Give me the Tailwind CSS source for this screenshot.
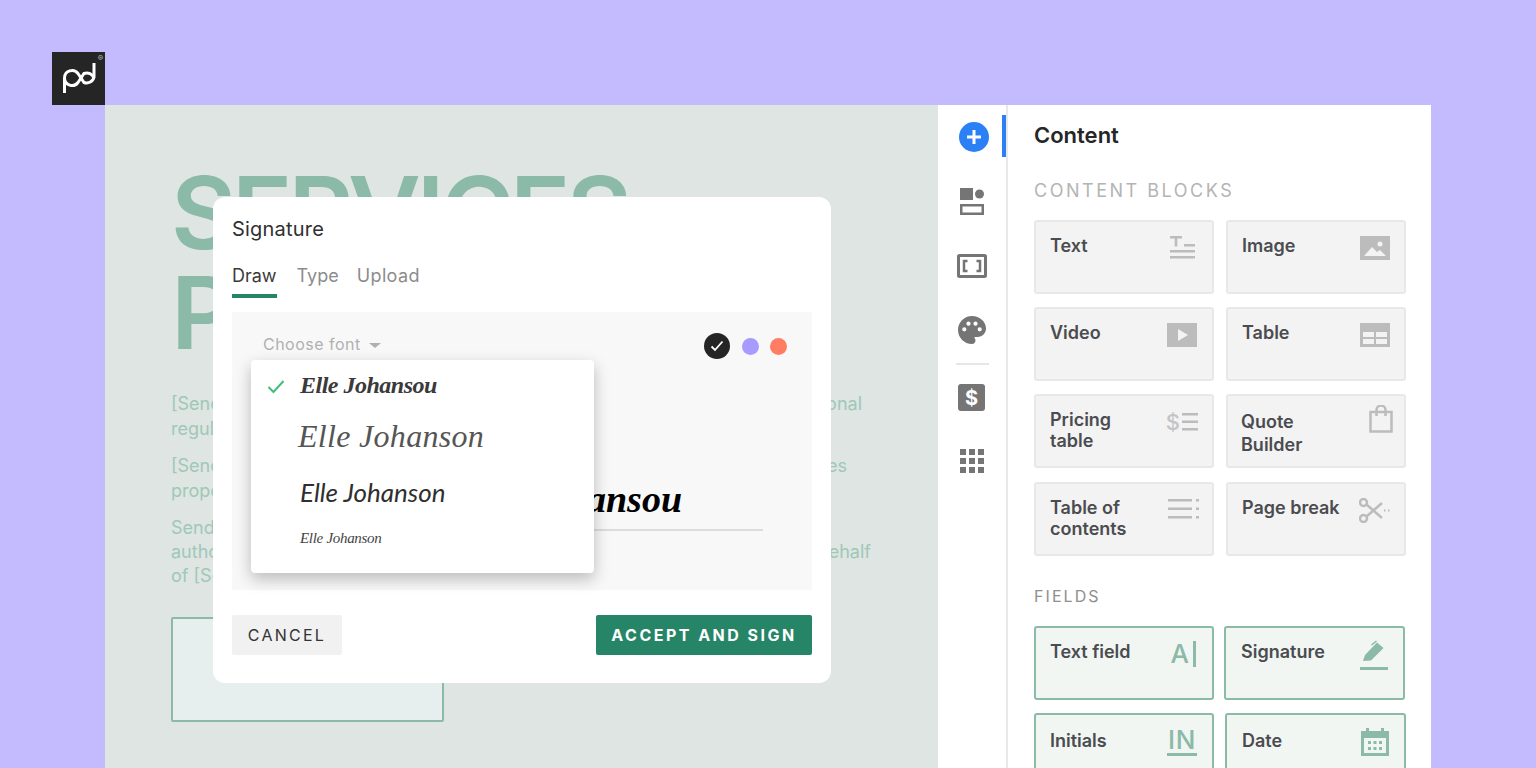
<!DOCTYPE html>
<html lang="en">
<head>
    <meta charset="UTF-8">
    <title>PandaDoc - Signature</title>
    <script src="https://cdn.jsdelivr.net/npm/@tailwindcss/browser@4"></script>
</head>
<body class="bg-[#c4bbff] font-['Inter',sans-serif] overflow-hidden">
<div class="relative w-[1536px] h-[768px] overflow-hidden pt-[105px] pl-[105px]">

    <!-- logo -->
    <div class="absolute left-[52px] top-[52px] w-[53px] h-[53px] bg-[#252525] z-10">
        <svg class="absolute inset-0" width="53" height="53" viewBox="0 0 53 53" fill="none" stroke="#fff" stroke-width="3">
            <path d="M12.500 41V26a7.500 7.500 0 0 1 13.500-4.500l6 9a7.500 7.500 0 0 0 10-5.500V11"/>
            <path d="M12.500 26a7.500 7.500 0 0 0 13.500 4.500l6-9a7.500 7.500 0 0 1 10 4.500"/>
        </svg>
        <span class="absolute right-[2px] top-[1px] text-[8px] leading-[10px] text-[#bbb]">®</span>
    </div>

    <div class="flex w-[1326px] h-[663px] overflow-hidden">

        <!-- document -->
        <div class="relative w-[833px] shrink-0 bg-[#dee5e3] pl-[66px] pt-[58px] text-[#8cbaa8]">
            <h1 class="text-[100px] leading-[100px] font-semibold tracking-[-4px]">SERVICES<br>PROPOSAL</h1>
            <div class="mt-[28px] text-[18px] leading-[25px] text-[#9fc8b7] whitespace-nowrap">
                <p>
                    <span class="block w-[691px] [text-align-last:justify]">[Sender.Company] provides a full range of certified and licensed professional</span>
                    <span class="block">regulatory services for all of its clients</span>
                </p>
                <p class="mt-[12px]">
                    <span class="block w-[676px] [text-align-last:justify]">[Sender.Company] will deliver these services as outlined in this services</span>
                    <span class="block">proposal and its terms</span>
                </p>
                <p class="mt-[12px]">
                    <span class="block">Sender is duly authorized to sign this document and to act</span>
                    <span class="block leading-[24px] w-[700px] [text-align-last:justify]">authorized parties, and has the full right to sign on behalf</span>
                    <span class="block leading-[24px]">of [Sender.Company]</span>
                </p>
            </div>
            <div class="mt-[29px] w-[273px] h-[105px] border-2 border-[#8bbaa8] rounded-[2px] bg-[#e6efed]"></div>

            <!-- signature modal -->
            <div class="absolute left-[108px] top-[92px] w-[618px] h-[486px] bg-white rounded-[12px] px-[19px] pt-[19px] text-[#333]">
                <div class="text-[20px] leading-[26px] tracking-[0.01em] text-[#303030]">Signature</div>
                <div class="flex mt-[21px] text-[18px] leading-[26px] text-[#8c8c8c]">
                    <div class="h-[35px] border-b-[4px] border-[#268567] text-[#3a3a3a] mr-[20px]">Draw</div>
                    <div class="mr-[18px]">Type</div>
                    <div class="tracking-[0.02em]">Upload</div>
                </div>
                <div class="relative mt-[14px] h-[278px] bg-[#f8f8f8]">
                    <div class="flex items-center gap-[8px] pl-[31px] pt-[20px] text-[16px] leading-[24px] tracking-[0.03em] text-[#b0b0b0]">
                        Choose font
                        <span class="mt-[3px] w-0 h-0 border-x-[6px] border-x-transparent border-t-[5px] border-t-[#b0b0b0]"></span>
                    </div>
                    <div class="absolute right-[25px] top-[21px] flex items-center">
                        <div class="w-[26px] h-[26px] mr-[12px] rounded-full bg-[#252525] flex items-center justify-center">
                            <svg width="14" height="12" viewBox="0 0 14 12" fill="none" stroke="#fff" stroke-width="1.800"><path d="M1.500 6.500l3.500 3.500 7.500-8.500"/></svg>
                        </div>
                        <div class="w-[17px] h-[17px] mr-[11px] rounded-full bg-[#a79bff]"></div>
                        <div class="w-[17px] h-[17px] rounded-full bg-[#ff7d63]"></div>
                    </div>
                    <!-- current signature -->
                    <div class="absolute left-[130px] right-[49px] top-[217px] border-t-2 border-[#dcdcdc]"></div>
                    <div class="absolute left-[223px] top-[165px] font-['Liberation_Serif',serif] italic font-bold text-[38px] leading-[44px] text-black whitespace-nowrap">Elle Johansou</div>
                    <!-- font dropdown -->
                    <div class="absolute left-[19px] top-[48px] w-[343px] h-[213px] bg-white rounded-[4px] shadow-[0_6px_16px_rgba(0,0,0,0.25)] pl-[49px] text-[#333] whitespace-nowrap">
                        <svg class="absolute left-[16px] top-[19px]" width="18" height="15" viewBox="0 0 18 15" fill="none" stroke="#3fc07a" stroke-width="2"><path d="M1.500 8l5 5 10-11"/></svg>
                        <div class="h-[50px] pt-[8px] font-['Liberation_Serif',serif] italic font-bold text-[24px] leading-[34px] text-[#3a3a3a] tracking-[-0.5px]">Elle Johansou</div>
                        <div class="h-[50px] pt-[6px] -ml-[2px] font-['Liberation_Serif',serif] italic text-[32px] leading-[40px] text-[#555] tracking-[0.3px]">Elle Johanson</div>
                        <div class="h-[60px] pt-[14px] font-['Lato',sans-serif] italic text-[26px] leading-[36px] text-[#2f2f2f]">Elle Johanson</div>
                        <div class="pt-[6px] font-['Liberation_Serif',serif] italic text-[15px] leading-[24px] text-[#444] tracking-[-0.3px]">Elle Johanson</div>
                    </div>
                </div>
                <div class="flex justify-between mt-[25px]">
                    <div class="w-[110px] h-[40px] rounded-[2px] bg-[#f1f1f1] flex items-center justify-center text-[16px] tracking-[0.14em] text-[#333]">CANCEL</div>
                    <div class="w-[216px] h-[40px] rounded-[2px] bg-[#268567] flex items-center justify-center text-[16px] font-bold tracking-[0.155em] text-white">ACCEPT AND SIGN</div>
                </div>
            </div>
        </div>

        <!-- icon rail -->
        <div class="relative w-[70px] shrink-0 bg-white border-r-2 border-[#e8e8e8] flex flex-col items-center pt-[17px] text-[#757575]">
            <div class="absolute right-0 top-[10px] w-[4px] h-[42px] bg-[#2b80f5]"></div>
            <svg class="ml-[4px]" width="30" height="30" viewBox="0 0 30 30"><circle cx="15" cy="15" r="15" fill="#2b80f5"/><path d="M15 8v14M8 15h14" stroke="#fff" stroke-width="3"/></svg>
            <svg class="mt-[36px]" width="26" height="28" viewBox="0 0 26 28" fill="currentColor"><rect x="1" y="0" width="13" height="12"/><circle cx="20.500" cy="6" r="4.500"/><path fill-rule="evenodd" d="M1 16h24v11H1zM3.500 18.500v6h19v-6z"/></svg>
            <svg class="mt-[38px]" width="30" height="24" viewBox="0 0 30 24" fill="none" stroke="currentColor"><rect x="1.500" y="1.500" width="27" height="21" rx="1" stroke-width="3"/><path d="M10.500 7H7v10h3.500M19.500 7H23v10h-3.500" stroke-width="2.500"/></svg>
            <svg class="mt-[38px]" width="28" height="28" viewBox="2 2 20 20" fill="currentColor"><path d="M12 2C6.490 2 2 6.490 2 12s4.490 10 10 10c1.380 0 2.500-1.120 2.500-2.500 0-.61-.23-1.200-.64-1.670-.08-.1-.13-.21-.13-.33 0-.28.22-.5.500-.5H16c3.310 0 6-2.690 6-6 0-4.960-4.490-9-10-9zm-5.500 11a1.500 1.500 0 1 1 0-3 1.500 1.500 0 0 1 0 3zm3-4a1.500 1.500 0 1 1 0-3 1.500 1.500 0 0 1 0 3zm5 0a1.500 1.500 0 1 1 0-3 1.500 1.500 0 0 1 0 3zm3 4a1.500 1.500 0 1 1 0-3 1.500 1.500 0 0 1 0 3z"/></svg>
            <div class="mt-[19px] w-[33px] h-[2px] bg-[#e6e6e6]"></div>
            <svg class="mt-[19px]" width="28" height="27" viewBox="0 0 28 27"><rect width="27" height="27" rx="3" fill="currentColor"/><text x="13.500" y="21" text-anchor="middle" font-size="20" font-weight="700" fill="#fff" font-family="Inter, sans-serif">$</text></svg>
            <svg class="mt-[38px]" width="24" height="24" viewBox="0 0 24 24" fill="currentColor"><path d="M0 0h6v6H0zM9 0h6v6H9zM18 0h6v6h-6zM0 9h6v6H0zM9 9h6v6H9zM18 9h6v6h-6zM0 18h6v6H0zM9 18h6v6H9zM18 18h6v6h-6z"/></svg>
        </div>

        <!-- content panel -->
        <div class="flex-1 bg-white pl-[26px] pt-[17px] text-[#4b4c50] font-semibold text-[18px] leading-[21px]">
            <div class="text-[22px] leading-[26px] text-[#262626]">Content</div>
            <div class="mt-[31px] text-[18px] leading-[24px] font-normal tracking-[0.14em] text-[#b4b4b4]">CONTENT BLOCKS</div>
            <div class="mt-[17px] grid grid-cols-[180px_180px] gap-x-[12px] gap-y-[13px] auto-rows-[74px]">
                <div class="relative border-2 border-[#e8e8e8] rounded-[3px] bg-[#f3f3f3] pl-[14px] pt-[13px]">Text
                    <svg class="absolute right-[17px] top-[14px]" width="25" height="25" viewBox="0 0 25 25" fill="#bcbcbc"><path d="M0 0h12v2.500H7.300v8H4.700v-8H0zM14 8h11v2.500H14zM0 14h25v2.500H0zM0 20h25v2.500H0z"/></svg>
                </div>
                <div class="relative border-2 border-[#e8e8e8] rounded-[3px] bg-[#f3f3f3] pl-[14px] pt-[13px]">Image
                    <svg class="absolute right-[14px] top-[14px]" width="30" height="24" viewBox="0 0 30 24"><rect width="30" height="24" fill="#bcbcbc"/><path d="M4 20l8-9 5 5 3-2 6 6z" fill="#f3f3f3"/><circle cx="20" cy="8" r="2.500" fill="#f3f3f3"/></svg>
                </div>
                <div class="relative border-2 border-[#e8e8e8] rounded-[3px] bg-[#f3f3f3] pl-[14px] pt-[13px]">Video
                    <svg class="absolute right-[15px] top-[14px]" width="30" height="24" viewBox="0 0 30 24"><rect width="30" height="24" fill="#bcbcbc"/><path d="M11 6l10 6-10 6z" fill="#f3f3f3"/></svg>
                </div>
                <div class="relative border-2 border-[#e8e8e8] rounded-[3px] bg-[#f3f3f3] pl-[14px] pt-[13px]">Table
                    <svg class="absolute right-[14px] top-[14px]" width="30" height="24" viewBox="0 0 30 24"><rect width="30" height="24" fill="#bcbcbc"/><path d="M3 9h11v5H3zM16 9h11v5H16zM3 16h11v5H3zM16 16h11v5H16z" fill="#f3f3f3"/></svg>
                </div>
                <div class="relative border-2 border-[#e8e8e8] rounded-[3px] bg-[#f3f3f3] pl-[14px] pt-[13px]">Pricing<br>table
                    <div class="absolute right-[14px] top-[14px] flex items-center gap-[2px]">
                        <span class="text-[22px] leading-[24px] font-medium text-[#c4c4c4]">$</span>
                        <svg width="16" height="18" viewBox="0 0 16 18" fill="#bcbcbc"><path d="M0 0h16v2.500H0zM0 7.500h16V10H0zM0 15h16v2.500H0z"/></svg>
                    </div>
                </div>
                <div class="relative border-2 border-[#e8e8e8] rounded-[3px] bg-[#f3f3f3] pl-[13px] pt-[14px] leading-[23px]">Quote<br>Builder
                    <svg class="absolute right-[11px] top-[9px]" width="24" height="28" viewBox="0 0 24 28" fill="none" stroke="#bcbcbc" stroke-width="2.500"><path d="M1.500 7h21v19.500h-21zM7.500 11V5a4.500 4.500 0 0 1 9 0v6"/></svg>
                </div>
                <div class="relative border-2 border-[#e8e8e8] rounded-[3px] bg-[#f3f3f3] pl-[14px] pt-[13px] mt-[1px] -mb-[1px]">Table of<br>contents
                    <svg class="absolute right-[13px] top-[15px]" width="31" height="20" viewBox="0 0 31 20" fill="#bcbcbc"><path d="M0 0h24v2.500H0zM0 8.500h24V11H0zM0 17h24v2.500H0zM28 0h3v2.500h-3zM28 8.500h3V11h-3zM28 17h3v2.500h-3z"/></svg>
                </div>
                <div class="relative border-2 border-[#e8e8e8] rounded-[3px] bg-[#f3f3f3] pl-[14px] pt-[13px] mt-[1px] -mb-[1px]">Page break
                    <svg class="absolute right-[14px] top-[14px]" width="31" height="25" viewBox="0 0 31 25" fill="none" stroke="#bcbcbc" stroke-width="2.500"><circle cx="4.500" cy="4.500" r="3.500"/><circle cx="4.500" cy="20.500" r="3.500"/><path d="M7.500 6.500L23 20M7.500 18.500L23 5"/><path d="M25 12.500h1.500M29 12.500h1.500" stroke-width="2"/></svg>
                </div>
            </div>
            <div class="mt-[29px] text-[16px] leading-[24px] font-normal tracking-[0.13em] text-[#8f8f8f]">FIELDS</div>
            <div class="mt-[18px] grid grid-cols-[180px_181px] gap-x-[10px] gap-y-[13px] auto-rows-[74px]">
                <div class="relative border-2 border-[#8bbaa8] rounded-[3px] bg-[#f1f6f3] pl-[14px] pt-[13px]">Text field
                    <div class="absolute right-[16px] top-[13px] flex items-end gap-[4px]">
                        <span class="text-[#8bbaa8] text-[26px] leading-[26px] font-medium">A</span><span class="w-[3px] h-[26px] bg-[#8bbaa8]"></span>
                    </div>
                </div>
                <div class="relative border-2 border-[#8bbaa8] rounded-[3px] bg-[#f1f6f3] pl-[15px] pt-[13px]">Signature
                    <svg class="absolute right-[15px] top-[12px]" width="28" height="30" viewBox="0 0 28 30" fill="#8bbaa8"><path d="M3 21l2-6L17 2.500l6.500 5.500L11 20.500zM11 4.500l5-4 1 1-5 4z"/><path d="M0 27h28v3H0z"/></svg>
                </div>
                <div class="relative border-2 border-[#8bbaa8] rounded-[3px] bg-[#f1f6f3] pl-[14px] pt-[15px]">Initials
                    <div class="absolute right-[15px] top-[11px] w-[30px] text-center border-b-[3px] border-[#8bbaa8] text-[#8bbaa8] text-[26px] leading-[27px] font-medium tracking-[0.02em]">IN</div>
                </div>
                <div class="relative ml-[1px] -mr-[1px] border-2 border-[#8bbaa8] rounded-[3px] bg-[#f1f6f3] pl-[15px] pt-[15px]">Date
                    <svg class="absolute right-[15px] top-[13px]" width="28" height="28" viewBox="0 0 28 28"><path d="M0 3h5V0h3v3h12V0h3v3h5v25H0z" fill="#8bbaa8"/><path d="M3 10h22v15H3z" fill="#f1f6f3"/><path d="M7 13h3v3H7zM12.500 13h3v3h-3zM18 13h3v3h-3zM7 19h3v3H7zM12.500 19h3v3h-3zM18 19h3v3h-3z" fill="#8bbaa8"/></svg>
                </div>
            </div>
        </div>
    </div>
</div>
</body>
</html>
